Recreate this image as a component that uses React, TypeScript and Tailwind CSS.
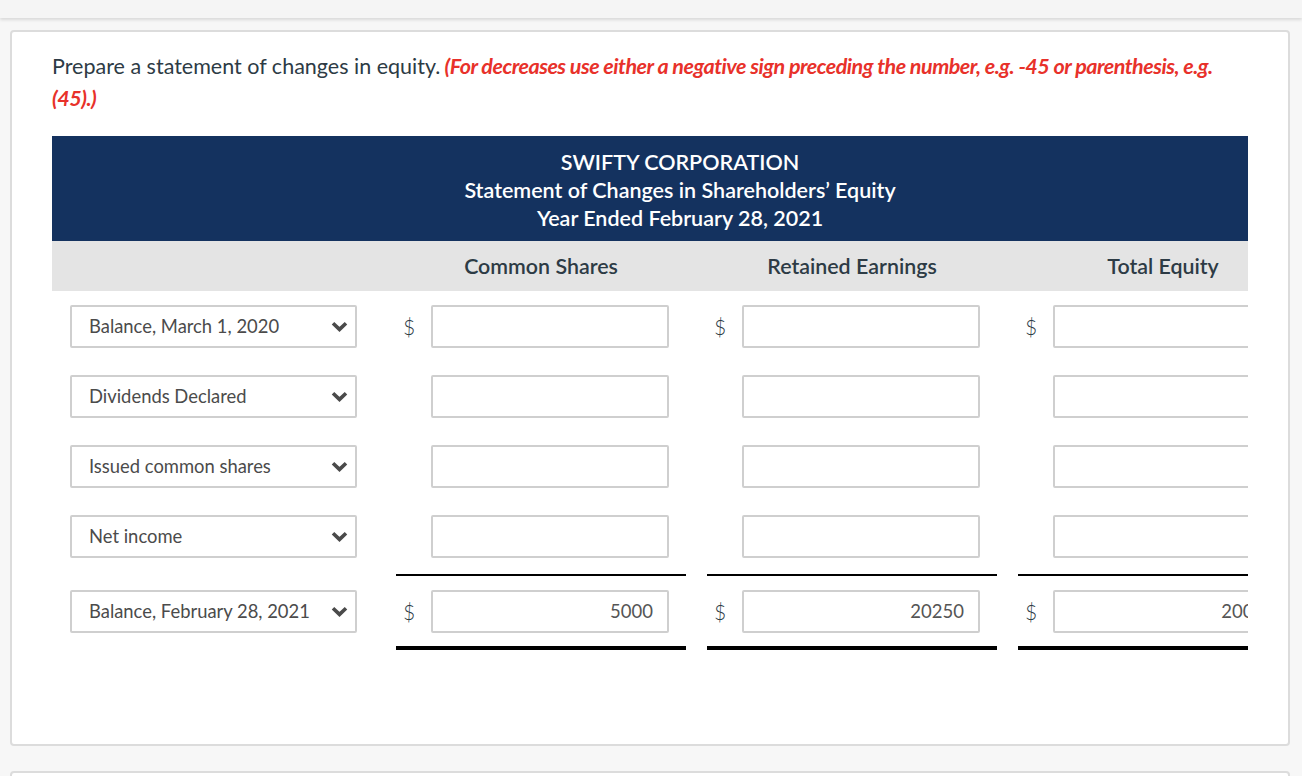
import React from 'react';

type Row = {
  label: string;
  dollar: boolean;
  values: [string, string, string];
};

const rows: Row[] = [
  { label: 'Balance, March 1, 2020', dollar: true, values: ['', '', ''] },
  { label: 'Dividends Declared', dollar: false, values: ['', '', ''] },
  { label: 'Issued common shares', dollar: false, values: ['', '', ''] },
  { label: 'Net income', dollar: false, values: ['', '', ''] },
];

const total: Row = { label: 'Balance, February 28, 2021', dollar: true, values: ['5000', '20250', '20000'] };

const Chevron = () => (
  <svg width="17" height="11" viewBox="0 0 17 11" className="shrink-0">
    <path d="M2 2.2 L8.5 8.4 L15 2.2" fill="none" stroke="#4a4a4a" strokeWidth="3.6" strokeLinejoin="miter" />
  </svg>
);

const SelectBox = ({ label }: { label: string }) => (
  <div className="ml-[18px] w-[287px] h-[43px] border-2 border-[#cfcfcf] rounded-[2px] bg-white flex items-center justify-between pl-[17px] pr-[7px]">
    <span className="text-[18.4px] text-[#4b4b4b] whitespace-nowrap">{label}</span>
    <Chevron />
  </div>
);

const AmountCell = ({ dollar, value }: { dollar: boolean; value: string }) => (
  <div className="w-[290px] shrink-0 flex items-center">
    <span className="w-[35px] pl-[7px] text-[21px] text-[#2d3b45] font-light">{dollar ? '$' : ''}</span>
    <div className="w-[238px] h-[43px] shrink-0 border-2 border-[#cfcfcf] rounded-[2px] bg-white flex items-center justify-end pr-[14px] text-[18.5px] text-[#555] overflow-hidden whitespace-nowrap">
      {value}
    </div>
  </div>
);

const TableRow = ({ row, className }: { row: Row; className?: string }) => (
  <div className={`flex items-center h-[43px] ${className ?? ''}`}>
    <div className="w-[344px] shrink-0">
      <SelectBox label={row.label} />
    </div>
    <div className="flex gap-[21px]">
      {row.values.map((v, i) => (
        <AmountCell key={i} dollar={row.dollar} value={v} />
      ))}
    </div>
  </div>
);

const RuleRow = ({ thick, className }: { thick?: boolean; className?: string }) => (
  <div className={`flex ${className ?? ''}`}>
    <div className="w-[344px] shrink-0" />
    <div className="flex gap-[21px]">
      {[0, 1, 2].map((i) => (
        <div key={i} className={`w-[290px] bg-black ${thick ? 'h-[4px]' : 'h-[2px]'}`} />
      ))}
    </div>
  </div>
);

export default function App() {
  return (
    <div className="h-screen bg-[#f7f7f7] font-['Lato','Noto_Sans',sans-serif] text-[#2d3b45] overflow-hidden">
      <div className="h-[18px] bg-[#f5f5f5] shadow-[0_2px_3px_rgba(0,0,0,0.12)]" />

      <div className="pl-[10px] pr-[12px] pt-[12px]">
        <div className="bg-white border-2 border-[#dcdcdc] rounded-[4px] h-[716px] pl-[40px] pt-[18px]">
          <p className="text-[21.5px] leading-[32px] w-[1196px]">
            Prepare a statement of changes in equity.
            <span className="text-[#e8312a] font-bold italic tracking-[-0.5px]">
              {' '}(For decreases use either a negative sign preceding the number, e.g. -45 or parenthesis, e.g.
              <br />
              (45).)
            </span>
          </p>

          <div className="mt-[22px] w-[1196px] overflow-hidden">
            <div className="w-[1256px]">
              <div className="h-[105px] bg-[#14325f] text-white flex flex-col items-center justify-center text-[21.5px] leading-[28px] font-semibold pt-[2px]">
                <div>SWIFTY CORPORATION</div>
                <div>Statement of Changes in Shareholders’ Equity</div>
                <div>Year Ended February 28, 2021</div>
              </div>

              <div className="h-[50px] bg-[#e4e4e4] flex items-center text-[21.4px] font-semibold text-[#2d3b45]">
                <div className="w-[344px] shrink-0" />
                <div className="flex gap-[21px]">
                  <div className="w-[290px] text-center">Common Shares</div>
                  <div className="w-[290px] text-center">Retained Earnings</div>
                  <div className="w-[290px] text-center">Total Equity</div>
                </div>
              </div>

              {rows.map((row, i) => (
                <TableRow key={row.label} row={row} className={i === 0 ? 'mt-[14px]' : 'mt-[27px]'} />
              ))}

              <RuleRow className="mt-[16px]" />
              <TableRow row={total} className="mt-[14px]" />
              <RuleRow thick className="mt-[13px]" />
            </div>
          </div>
        </div>

        <div className="mt-[25px] bg-white border-2 border-[#dcdcdc] rounded-[4px] h-[200px]" />
      </div>
    </div>
  );
}
